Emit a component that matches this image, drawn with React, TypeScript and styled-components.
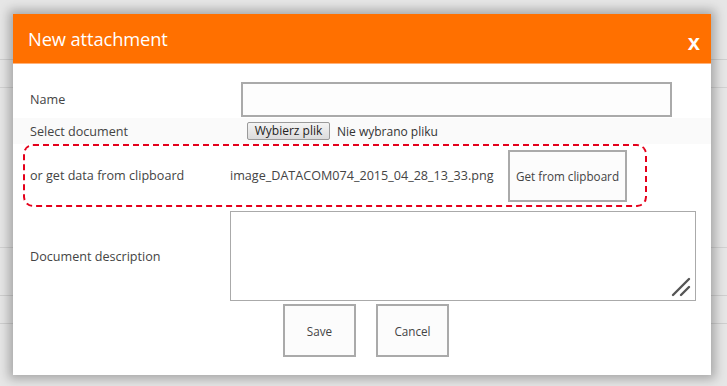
import React from "react";
import styled, { createGlobalStyle } from "styled-components";

const GlobalStyle = createGlobalStyle`
  html, body {
    margin: 0;
    padding: 0;
  }
  body {
    font-family: "Open Sans", "Noto Sans", sans-serif;
    background: #e9e9e9;
  }
`;

const Backdrop = styled.div`
  width: 727px;
  height: 386px;
  box-sizing: border-box;
  padding: 14px 16px 0 13px;
  overflow: hidden;
  background-color: #e6e6e6;
  background-image:
    linear-gradient(#cfcfcf, #cfcfcf),
    linear-gradient(#d2d2d2, #d2d2d2),
    linear-gradient(#d2d2d2, #d2d2d2),
    linear-gradient(#cfcfcf, #cfcfcf),
    linear-gradient(#cfcfcf, #cfcfcf);
  background-size: 100% 1px;
  background-repeat: no-repeat;
  background-position: 0 59px, 0 87px, 0 247px, 0 295px, 0 323px;
`;

const Dialog = styled.div`
  width: 698px;
  background: #fff;
  box-shadow: 0 0 10px 4px rgba(0, 0, 0, 0.28);
`;

const Header = styled.div`
  height: 50px;
  background: #ff7000;
  border-bottom: 1px solid #ffb27a;
  box-sizing: border-box;
  display: flex;
  align-items: center;
  justify-content: space-between;
  padding: 0 11px 0 15px;
`;

const Title = styled.h1`
  margin: 0;
  font-size: 18.3px;
  font-weight: 400;
  color: #fff;
  letter-spacing: -0.1px;
`;

const Close = styled.span`
  align-self: flex-end;
  margin-bottom: 10px;
  font-family: "Liberation Sans", Arial, sans-serif;
  font-weight: 700;
  font-size: 22px;
  line-height: 20px;
  color: #fff;
`;

const Body = styled.div`
  padding: 17px 0 18px 0;
  display: flex;
  flex-direction: column;
`;

const Row = styled.div<{ $height: number; $shade?: boolean }>`
  display: grid;
  grid-template-columns: 211px 1fr;
  align-items: center;
  height: ${(p) => p.$height}px;
  padding-left: 17px;
  background: ${(p) => (p.$shade ? "#fafafa" : "transparent")};
`;

const Label = styled.label`
  font-size: 12.6px;
  color: #444;
`;

const TextInput = styled.input`
  box-sizing: border-box;
  width: 431px;
  height: 35px;
  border: 2px solid #aaa;
  background: #fdfdfd;
  outline: none;
`;

const FileField = styled.div`
  display: flex;
  align-items: center;
  gap: 7px;
  margin-left: 6px;
`;

const FileButton = styled.button`
  font-family: "Open Sans", sans-serif;
  font-size: 12px;
  color: #222;
  height: 18px;
  width: 83px;
  padding: 0;
  border: 1px solid #9a9a9a;
  border-radius: 2px;
  background: linear-gradient(#f4f4f4, #dcdcdc);
  line-height: 14px;
`;

const FileStatus = styled.span`
  font-size: 12px;
  color: #333;
`;

const ClipboardBox = styled.div`
  margin: 0 64px 0 10px;
  height: 63px;
  box-sizing: border-box;
  border: 2px dashed #e4001b;
  border-radius: 10px;
  display: grid;
  grid-template-columns: 200px 1fr auto;
  align-items: center;
  padding: 0 18px 0 5px;
`;

const FileName = styled.span`
  font-size: 12.6px;
  color: #444;
`;

const BoxButton = styled.button<{ $w: number; $h: number }>`
  width: ${(p) => p.$w}px;
  height: ${(p) => p.$h}px;
  box-sizing: border-box;
  border: 2px solid #aaa;
  background: #fcfcfc;
  font-family: "Open Sans", sans-serif;
  font-size: 11.7px;
  color: #444;
  padding: 0;
`;

const DescRow = styled.div`
  display: grid;
  grid-template-columns: 200px 1fr;
  align-items: center;
  padding-left: 17px;
  margin-top: 4px;
`;

const AreaWrap = styled.div`
  position: relative;
  width: 466px;
  height: 90px;
  box-sizing: border-box;
  border: 1px solid #aaa;
  background: #fff;
`;

const Grip = styled.svg`
  position: absolute;
  right: 3px;
  bottom: 3px;
`;

const Actions = styled.div`
  display: flex;
  gap: 20px;
  padding-left: 270px;
  margin-top: 3px;
`;

export default function App() {
  return (
    <>
      <GlobalStyle />
      <Backdrop>
        <Dialog>
          <Header>
            <Title>New attachment</Title>
            <Close>x</Close>
          </Header>
          <Body>
            <Row $height={37}>
              <Label>Name</Label>
              <TextInput type="text" />
            </Row>
            <Row $height={26} $shade>
              <Label>Select document</Label>
              <FileField>
                <FileButton>Wybierz plik</FileButton>
                <FileStatus>Nie wybrano pliku</FileStatus>
              </FileField>
            </Row>
            <ClipboardBox>
              <Label>or get data from clipboard</Label>
              <FileName>image_DATACOM074_2015_04_28_13_33.png</FileName>
              <BoxButton $w={119} $h={52}>Get from clipboard</BoxButton>
            </ClipboardBox>
            <DescRow>
              <Label>Document description</Label>
              <AreaWrap>
                <Grip width="22" height="22" viewBox="0 0 22 22">
                  <path d="M3 20 L19 4" stroke="#555" strokeWidth="2.4" strokeLinecap="round" />
                  <path d="M11 20 L19 12" stroke="#555" strokeWidth="2.4" strokeLinecap="round" />
                </Grip>
              </AreaWrap>
            </DescRow>
            <Actions>
              <BoxButton $w={73} $h={53}>Save</BoxButton>
              <BoxButton $w={73} $h={53}>Cancel</BoxButton>
            </Actions>
          </Body>
        </Dialog>
      </Backdrop>
    </>
  );
}
